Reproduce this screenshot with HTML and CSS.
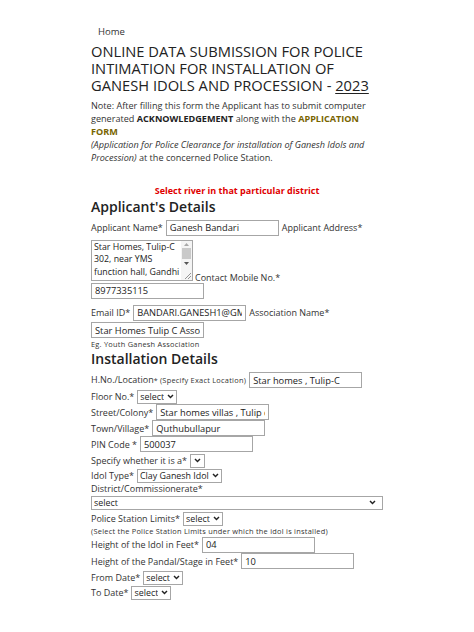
FILE: index.html
```html
<!DOCTYPE html>
<html lang="en">
<head>
<meta charset="utf-8">
<title>Ganesh Idol Installation</title>
<link rel="stylesheet" href="styles.css">
</head>
<body>
<div class="page">
  <div class="crumb">Home</div>
  <h1 class="title">ONLINE DATA SUBMISSION FOR POLICE INTIMATION FOR INSTALLATION OF GANESH IDOLS AND PROCESSION - <u>2023</u></h1>
  <p class="note">Note: After filling this form the Applicant has to submit computer generated <b>ACKNOWLEDGEMENT</b> along with the <b class="olive">APPLICATION FORM</b><br><i>(Application for Police Clearance for installation of Ganesh Idols and Procession)</i> at the concerned Police Station.</p>
  <p class="warn">Select river in that particular district</p>

  <h2 class="section">Applicant's Details</h2>
  <div class="row r1"><span class="lbl">Applicant Name*</span><input class="inp" value="Ganesh Bandari"><span class="lbl">Applicant Address*</span></div>
  <div class="row-ta">
    <div class="ta">
      <div class="ta-text">Star Homes, Tulip-C<br>302, near YMS<br>function hall, Gandhi</div>
      <div class="sb">
        <svg class="sb-up" width="11" height="7" viewBox="0 0 11 7"><path d="M3 5 L5.5 2 L8 5 Z" fill="#a8a8a8"/></svg>
        <div class="sb-thumb"></div>
        <svg class="sb-down" width="11" height="7" viewBox="0 0 11 7"><path d="M3 2 L5.5 5 L8 2 Z" fill="#555"/></svg>
        <svg class="grip" width="11" height="9" viewBox="0 0 11 9"><path d="M4 8 L10 2 M7 8 L10 5" stroke="#888" stroke-width="0.9"/></svg>
      </div>
    </div>
    <span class="lbl low">Contact Mobile No.*</span>
  </div>
  <div class="row r-mob"><input class="inp" value="8977335115"></div>
  <div class="row r-mail"><span class="lbl">Email ID*</span><input class="inp" value="BANDARI.GANESH1@GMAIL.COM"><span class="lbl">Association Name*</span></div>
  <div class="row r-assoc"><input class="inp" value="Star Homes Tulip C Association"></div>
  <div class="hint h1">Eg. Youth Ganesh Association</div>

  <h2 class="section sec2">Installation Details</h2>
  <div class="row r-hno"><span class="lbl">H.No./Location<span class="star">*</span> <small class="tiny">(Specify Exact Location)</small></span><input class="inp" value="Star homes , Tulip-C"></div>
  <div class="row s r-gap"><span class="lbl">Floor No.*</span><label class="sel"><select><option>select</option></select><svg class="chev" width="7" height="5" viewBox="0 0 7 5"><path d="M1 1 L3.5 3.6 L6 1" fill="none" stroke="#222" stroke-width="1.4"/></svg></label></div>
  <div class="row"><span class="lbl">Street/Colony*</span><input class="inp" value="Star homes villas , Tulip colony"></div>
  <div class="row"><span class="lbl">Town/Village*</span><input class="inp" value="Quthubullapur"></div>
  <div class="row"><span class="lbl">PIN Code *</span><input class="inp" value="500037"></div>
  <div class="row s r-gap"><span class="lbl">Specify whether it is a*</span><label class="sel empty"><select><option></option></select><svg class="chev" width="7" height="5" viewBox="0 0 7 5"><path d="M1 1 L3.5 3.6 L6 1" fill="none" stroke="#222" stroke-width="1.4"/></svg></label></div>
  <div class="row s"><span class="lbl">Idol Type*</span><label class="sel"><select><option>Clay Ganesh Idol</option></select><svg class="chev" width="7" height="5" viewBox="0 0 7 5"><path d="M1 1 L3.5 3.6 L6 1" fill="none" stroke="#222" stroke-width="1.4"/></svg></label></div>
  <div class="lbl-line">District/Commissionerate*</div>
  <div class="row s r-dist"><label class="sel wide"><select><option>select</option></select><svg class="chev" width="7" height="5" viewBox="0 0 7 5"><path d="M1 1 L3.5 3.6 L6 1" fill="none" stroke="#222" stroke-width="1.4"/></svg></label></div>
  <div class="row s r-gap"><span class="lbl">Police Station Limits*</span><label class="sel"><select><option>select</option></select><svg class="chev" width="7" height="5" viewBox="0 0 7 5"><path d="M1 1 L3.5 3.6 L6 1" fill="none" stroke="#222" stroke-width="1.4"/></svg></label></div>
  <div class="hint">(Select the Police Station Limits under which the idol is installed)</div>
  <div class="row r-half"><span class="lbl">Height of the Idol in Feet*</span><input class="inp" value="04"></div>
  <div class="row r-half"><span class="lbl">Height of the Pandal/Stage in Feet*</span><input class="inp" value="10"></div>
  <div class="row s r-gap"><span class="lbl">From Date*</span><label class="sel"><select><option>select</option></select><svg class="chev" width="7" height="5" viewBox="0 0 7 5"><path d="M1 1 L3.5 3.6 L6 1" fill="none" stroke="#222" stroke-width="1.4"/></svg></label></div>
  <div class="row s"><span class="lbl">To Date*</span><label class="sel"><select><option>select</option></select><svg class="chev" width="7" height="5" viewBox="0 0 7 5"><path d="M1 1 L3.5 3.6 L6 1" fill="none" stroke="#222" stroke-width="1.4"/></svg></label></div>
</div>
</body>
</html>
```

FILE: styles.css
```css
* { box-sizing: border-box; }

body {
  margin: 0;
  background: #ffffff;
  color: #333333;
  font-family: "Open Sans", "Noto Sans", sans-serif;
  font-size: 9px;
}

.page {
  width: 292px;
  margin: 0 auto;
  padding-top: 25px;
}

.crumb {
  padding-left: 7px;
  font-size: 9.5px;
  line-height: 14px;
  color: #333;
}

.title {
  margin: 4px 0 0;
  font-size: 14.7px;
  font-weight: 500;
  line-height: 17.2px;
  color: #222;
}

.title u { text-decoration-thickness: 1px; text-underline-offset: 2px; }

.note {
  margin: 4px 0 0;
  font-size: 9.1px;
  line-height: 13px;
  color: #333;
}

.note b { font-weight: 700; color: #222; }
.note .olive { color: #786400; }

.warn {
  margin: 20px 0 0;
  text-align: center;
  color: #e00000;
  font-weight: 700;
  font-size: 9px;
  line-height: 13px;
}

.section {
  margin: 1px 0 4px;
  font-size: 14px;
  font-weight: 600;
  line-height: 18px;
  color: #222;
}

.sec2 { margin: 1px 0 4px; }

.row {
  display: flex;
  align-items: center;
  gap: 3px;
  height: 16px;
}

.row.s { height: 15px; }
.r-gap { margin-top: 1px; }
.r-half { margin-top: 0.5px; }
.r-mob { margin-top: 2px; }
.r-mail { margin-top: 6px; }
.r-assoc { margin-top: 1.5px; }
.r-dist { margin-top: 1px; }

.lbl {
  white-space: nowrap;
  font-size: 9px;
  line-height: 13px;
  color: #333;
}

.lbl.low { line-height: 7px; }

.lbl-line {
  font-size: 9px;
  line-height: 11px;
  color: #333;
}

.tiny {
  font-size: 7.4px;
  letter-spacing: 0.25px;
  color: #333;
}

.star { font-size: 7px; }

.hint {
  font-size: 7.4px;
  letter-spacing: 0.25px;
  line-height: 10px;
  color: #333;
}

.hint.h1 { margin-top: 1px; }

.inp {
  width: 113px;
  height: 16px;
  margin: 0;
  padding: 0 3px;
  border: 1px solid #a6a6a6;
  border-radius: 0;
  background: #fff;
  color: #222;
  font-family: inherit;
  font-size: 9.3px;
  outline: none;
}

.row-ta {
  display: flex;
  align-items: flex-end;
  gap: 2px;
  margin-top: 4px;
}

.ta {
  display: flex;
  width: 102px;
  height: 41px;
  border: 1px solid #a6a6a6;
  background: #fff;
}

.ta-text {
  flex: 1;
  padding: 0 2px;
  font-size: 8.8px;
  line-height: 12.7px;
  color: #222;
  white-space: nowrap;
  overflow: hidden;
}

.sb {
  width: 11px;
  display: flex;
  flex-direction: column;
  align-items: center;
  background: #f4f4f4;
}

.sb-thumb {
  width: 9px;
  height: 11px;
  background: #c9c9c9;
}

.sb-down { margin-top: 1px; }
.grip { margin-top: auto; }

.sel {
  display: inline-flex;
  align-items: center;
  gap: 3px;
  height: 14px;
  padding: 0 2px;
  border: 1px solid #a6a6a6;
  background: #fff;
}

.sel select {
  appearance: none;
  -webkit-appearance: none;
  margin: 0;
  padding: 0;
  border: 0;
  background: transparent;
  color: #222;
  font-family: inherit;
  font-size: 8.9px;
  line-height: 12px;
  outline: none;
}

.sel.empty select { width: 0; }
.sel.empty { padding: 0 3px; gap: 0; }

.sel.wide {
  width: 100%;
  justify-content: space-between;
  height: 14px;
  padding-right: 6px;
}

.sel.wide select { flex: 1; }

.chev { flex: none; }
```
